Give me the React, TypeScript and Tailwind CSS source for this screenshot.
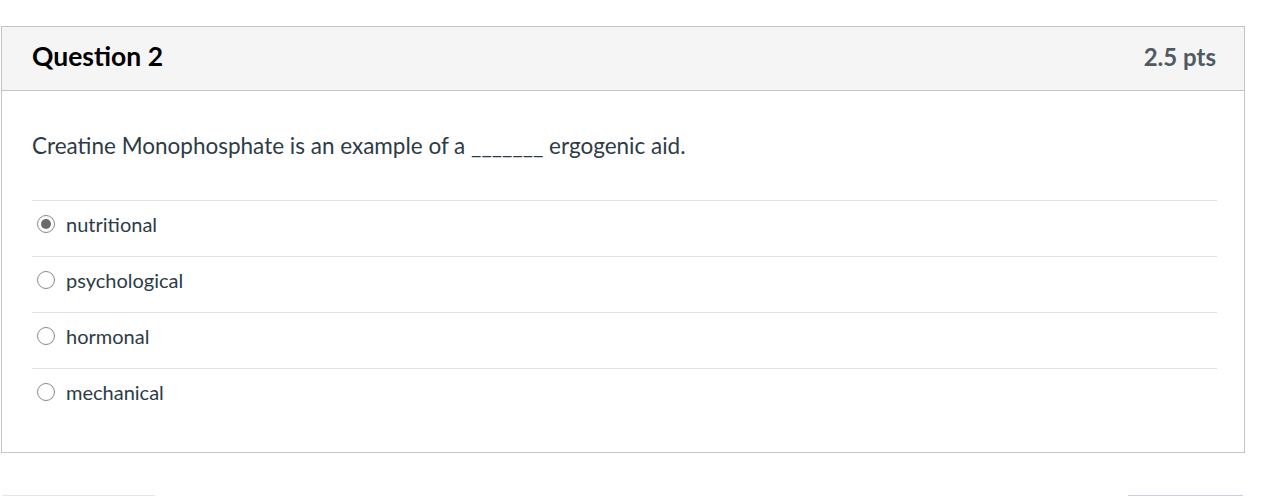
import React from "react";

const options = ["nutritional", "psychological", "hormonal", "mechanical"];

function Radio({ checked }: { checked: boolean }) {
  return (
    <span className="flex h-[18px] w-[18px] shrink-0 items-center justify-center rounded-full border-[1.5px] border-[#8a8a8a] bg-white">
      {checked && <span className="h-[10px] w-[10px] rounded-full bg-[#6b6b6b]" />}
    </span>
  );
}

export default function App() {
  return (
    <div className="h-[496px] w-[1267px] overflow-hidden bg-white font-['Lato','Liberation_Sans',sans-serif] text-[#2d3b45]">
      <div className="ml-[1px] mt-[26px] w-[1244px] border border-[#c4c4c4]">
        <div className="flex h-[64px] items-center justify-between border-b border-[#c4c4c4] bg-[#f5f5f5] pl-[30px] pr-[28px]">
          <h2 className="-mt-[4px] text-[26.5px] font-bold text-black">Question 2</h2>
          <span className="-mt-[4px] text-[24px] font-bold text-[#4f5a63]">2.5 pts</span>
        </div>
        <div className="pl-[30px] pr-[27px] pt-[43px] pb-[28px]">
          <p className="text-[22.5px] leading-[24px] text-[#2d3b45]">
            Creatine Monophosphate is an example of a _______ ergogenic aid.
          </p>
          <div className="mt-[42px]">
            {options.map((o, i) => (
              <div
                key={o}
                className="flex h-[56px] items-center gap-[11px] border-t border-[#e2e2e2] pb-[10px] pl-[5px]"
              >
                <Radio checked={i === 0} />
                <span className="text-[20px] text-[#2d3b45]">{o}</span>
              </div>
            ))}
          </div>
        </div>
      </div>
      <div className="mt-[42px] flex justify-between">
        <div className="ml-[2px] h-[2px] w-[153px] bg-[#e6e6e6]" />
        <div className="mr-[24px] h-[2px] w-[115px] bg-[#c9cfe0]" />
      </div>
    </div>
  );
}
